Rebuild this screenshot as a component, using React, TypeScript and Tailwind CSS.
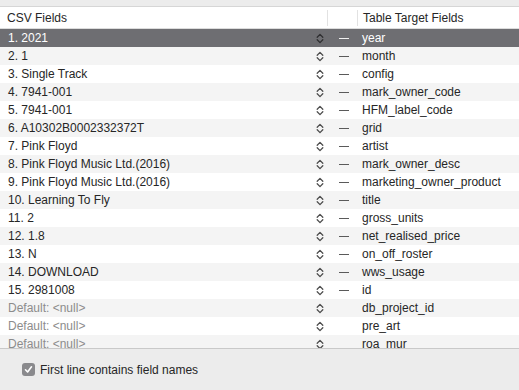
import React from "react";

const rows: { csv: string; target: string; def?: boolean }[] = [
  { csv: "1. 2021", target: "year" },
  { csv: "2. 1", target: "month" },
  { csv: "3. Single Track", target: "config" },
  { csv: "4. 7941-001", target: "mark_owner_code" },
  { csv: "5. 7941-001", target: "HFM_label_code" },
  { csv: "6. A10302B0002332372T", target: "grid" },
  { csv: "7. Pink Floyd", target: "artist" },
  { csv: "8. Pink Floyd Music Ltd.(2016)", target: "mark_owner_desc" },
  { csv: "9. Pink Floyd Music Ltd.(2016)", target: "marketing_owner_product" },
  { csv: "10. Learning To Fly", target: "title" },
  { csv: "11. 2", target: "gross_units" },
  { csv: "12. 1.8", target: "net_realised_price" },
  { csv: "13. N", target: "on_off_roster" },
  { csv: "14. DOWNLOAD", target: "wws_usage" },
  { csv: "15. 2981008", target: "id" },
  { csv: "Default: <null>", target: "db_project_id", def: true },
  { csv: "Default: <null>", target: "pre_art", def: true },
  { csv: "Default: <null>", target: "roa_mur", def: true },
];

function Stepper({ selected }: { selected: boolean }) {
  const c = selected ? "#2e2e30" : "#4d4d4d";
  return (
    <svg width="8" height="11" viewBox="0 0 8 11" fill="none">
      <path d="M1.2 4.2 L4 1.4 L6.8 4.2" stroke={c} strokeWidth="1.3" strokeLinecap="round" strokeLinejoin="round" />
      <path d="M1.2 6.8 L4 9.6 L6.8 6.8" stroke={c} strokeWidth="1.3" strokeLinecap="round" strokeLinejoin="round" />
    </svg>
  );
}

export default function App() {
  return (
    <div
      className="w-[519px] h-[390px] flex flex-col bg-white overflow-hidden text-[12px] text-[#262626]"
      style={{ fontFamily: '"Liberation Sans", Arial, sans-serif' }}
    >
      <div className="h-[7px] shrink-0 bg-[#ececec] border-b border-[#d6d6d6]" />
      <div className="h-[22px] shrink-0 flex items-center border-b border-[#dcdcdc] bg-white">
        <div className="w-[328px] pl-[7px] h-[16px] flex items-center border-r border-[#e2e2e2]">CSV Fields</div>
        <div className="w-[30px] h-[16px] border-r border-[#e2e2e2]" />
        <div className="pl-[5px] flex items-center">Table Target Fields</div>
      </div>
      <div className="flex-1 overflow-hidden">
        {rows.map((r, i) => {
          const selected = i === 0;
          const bg = selected ? "bg-[#6e6e72]" : i % 2 === 1 ? "bg-[#f4f4f4]" : "bg-white";
          return (
            <div key={i} className={`h-[18px] flex items-center ${bg} ${selected ? "text-white" : ""}`}>
              <div className="w-[328px] flex items-center pl-[8px] pr-[4px]">
                <span className={`flex-1 ${r.def ? "text-[#8c8c8c]" : ""}`}>{r.csv}</span>
                <Stepper selected={selected} />
              </div>
              <div className="w-[30px] flex items-center justify-center">
                {!r.def && (
                  <div className={`w-[10px] h-px ${selected ? "bg-[#f0f0f0]" : "bg-[#5a5a5a]"} ml-[1px]`} />
                )}
              </div>
              <div className="pl-[4px]">{r.target}</div>
            </div>
          );
        })}
      </div>
      <div className="h-[42px] shrink-0 bg-[#ececec] border-t border-[#c9c9c9] flex items-center pl-[22px] gap-[5px]">
        <div className="w-[13px] h-[13px] rounded-[3px] bg-[#8a8a8d] flex items-center justify-center">
          <svg width="9" height="9" viewBox="0 0 9 9" fill="none">
            <path d="M1.5 4.8 L3.6 7 L7.5 1.8" stroke="white" strokeWidth="1.6" strokeLinecap="round" strokeLinejoin="round" />
          </svg>
        </div>
        <span>First line contains field names</span>
      </div>
    </div>
  );
}
